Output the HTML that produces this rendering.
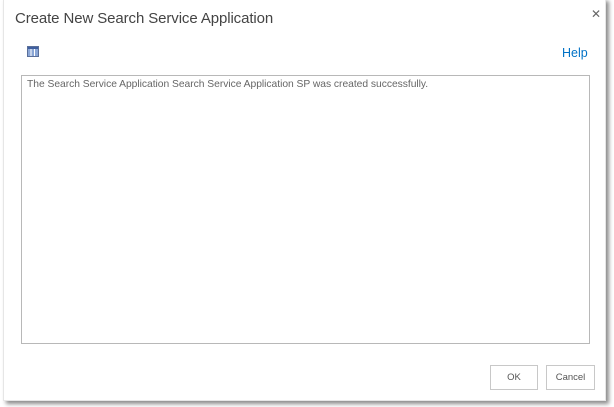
<!DOCTYPE html>
<html><head><meta charset="utf-8"><style>
html,body{margin:0;padding:0;width:614px;height:407px;background:#fff;overflow:hidden;font-family:"Liberation Sans",sans-serif}
.dlg{position:absolute;left:3px;top:-2px;width:601px;height:401px;background:#fff;border:1px solid #e6e6e6;box-shadow:3px 3px 4px rgba(0,0,0,.45)}
.title{position:absolute;left:15px;top:10px;font-size:15px;color:#444;letter-spacing:-0.1px}
.x{position:absolute;left:591px;top:7px;font-size:12px;color:#666}
.help{position:absolute;left:562px;top:46px;font-size:12.5px;color:#0072c6}
.box{position:absolute;left:21px;top:75px;width:567px;height:267px;border:1px solid #b8b8b8}
.msg{position:absolute;left:27px;top:79px;font-size:10.3px;color:#666;letter-spacing:-0.03px}
.btn{position:absolute;top:365px;height:23px;border:1px solid #c8c8c8;background:#fff;font-size:9.5px;color:#555;text-align:center;line-height:23px}
</style></head><body>
<div class="dlg"></div>
<div class="title">Create New Search Service Application</div>
<div class="x">✕</div>
<svg style="position:absolute;left:27px;top:46px" width="12" height="11" viewBox="0 0 12 11">
<rect x="0.5" y="0.5" width="11" height="10" fill="#8aa6d6" stroke="#5a6f9a"/>
<rect x="1" y="1" width="10" height="2" fill="#3f5f9f"/>
<line x1="4" y1="3" x2="4" y2="10" stroke="#fff"/><line x1="7.5" y1="3" x2="7.5" y2="10" stroke="#fff"/>
</svg>
<div class="help">Help</div>
<div class="box"></div>
<div class="msg">The Search Service Application Search Service Application SP was created successfully.</div>
<div class="btn" style="left:490px;width:46px">OK</div>
<div class="btn" style="left:546px;width:47px">Cancel</div>
</body></html>
